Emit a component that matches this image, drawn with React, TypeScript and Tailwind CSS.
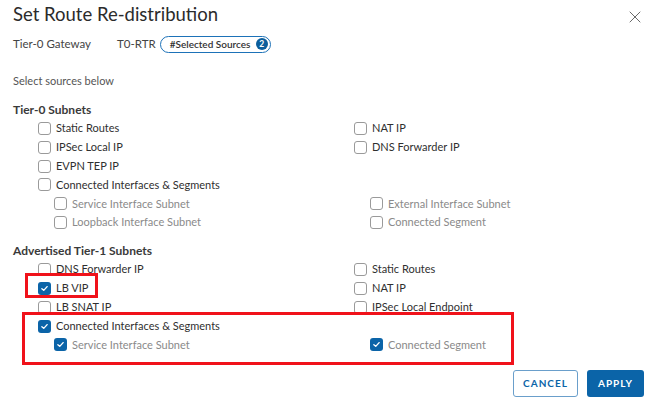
import { X } from 'lucide-react';

type Item = { label: string; checked?: boolean; sub?: boolean; dim?: boolean };
type Row = [Item | null, Item | null];

const TIER0: Row[] = [
  [{ label: 'Static Routes' }, { label: 'NAT IP' }],
  [{ label: 'IPSec Local IP' }, { label: 'DNS Forwarder IP' }],
  [{ label: 'EVPN TEP IP' }, null],
  [{ label: 'Connected Interfaces & Segments' }, null],
  [
    { label: 'Service Interface Subnet', sub: true, dim: true },
    { label: 'External Interface Subnet', sub: true, dim: true },
  ],
  [
    { label: 'Loopback Interface Subnet', sub: true, dim: true },
    { label: 'Connected Segment', sub: true, dim: true },
  ],
];

const TIER1: Row[] = [
  [{ label: 'DNS Forwarder IP' }, { label: 'Static Routes' }],
  [{ label: 'LB VIP', checked: true }, { label: 'NAT IP' }],
  [{ label: 'LB SNAT IP' }, { label: 'IPSec Local Endpoint' }],
  [{ label: 'Connected Interfaces & Segments', checked: true }, null],
  [
    { label: 'Service Interface Subnet', sub: true, dim: true, checked: true },
    { label: 'Connected Segment', sub: true, dim: true, checked: true },
  ],
];

function Checkbox({ checked }: { checked?: boolean }) {
  if (checked) {
    return (
      <span className="flex h-[13px] w-[13px] shrink-0 items-center justify-center rounded-[3px] bg-[#0b64a8]">
        <svg viewBox="0 0 12 12" className="h-[9px] w-[9px]">
          <path d="M2.5 6.2 L5 8.5 L9.5 3.5" fill="none" stroke="white" strokeWidth="1.8" strokeLinecap="round" strokeLinejoin="round" />
        </svg>
      </span>
    );
  }
  return <span className="h-[13px] w-[13px] shrink-0 rounded-[3px] border border-[#9a9a9a] bg-white" />;
}

function Option({ item }: { item: Item | null }) {
  if (!item) return <div />;
  return (
    <div className={`flex items-center gap-[5px] ${item.sub ? 'pl-4' : ''}`}>
      <Checkbox checked={item.checked} />
      <span className={item.dim ? 'text-[#8a8a8a]' : 'text-[#2f2f2f]'}>{item.label}</span>
    </div>
  );
}

function Section({ title, rows }: { title: string; rows: Row[] }) {
  return (
    <div>
      <div className="flex h-[19px] items-center text-[12px] font-bold text-[#3a3a3a]">{title}</div>
      <div className="grid grid-cols-[316px_1fr] pl-[25px]">
        {rows.map((r, i) => (
          <div key={i} className="contents">
            <div className="flex h-[18.85px] items-center">
              <Option item={r[0]} />
            </div>
            <div className="flex h-[18.85px] items-center">
              <Option item={r[1]} />
            </div>
          </div>
        ))}
      </div>
    </div>
  );
}

export default function App() {
  return (
    <div className="relative h-[409px] w-[660px] overflow-hidden bg-white px-[13px] text-[11px] font-['Lato',sans-serif] text-[#333]">
      <div className="flex h-[30px] items-center justify-between">
        <h1 className="text-[18.5px] font-normal text-[#2b2b2b]">Set Route Re-distribution</h1>
        <X className="mr-[2px] mt-[4px] h-[20px] w-[20px] text-[#6a6a6a]" strokeWidth={1.2} />
      </div>

      <div className="mt-[5px] flex h-[18px] items-center text-[11.5px] text-[#444]">
        <span className="w-[104px]">Tier-0 Gateway</span>
        <span className="mr-[4px]">T0-RTR</span>
        <span className="flex h-[17px] w-[111px] items-center justify-between rounded-full border-[1.5px] border-[#1d72b8] pl-[9px] pr-[2px] text-[10px] font-semibold text-[#333]">
          #Selected Sources
          <span className="flex h-[12px] w-[12px] items-center justify-center rounded-full bg-[#0b5e9c] text-[8.5px] font-bold text-white">
            2
          </span>
        </span>
      </div>

      <div className="mt-[19px] flex h-[18px] items-center text-[#555]">Select sources below</div>

      <div className="mt-[10px]">
        <Section title="Tier-0 Subnets" rows={TIER0} />
      </div>
      <div className="mt-[9px]">
        <Section title="Advertised Tier-1 Subnets" rows={TIER1} />
      </div>

      <div className="mt-[16px] flex justify-end gap-[9px] pr-[3px]">
        <button className="h-[27px] w-[65px] rounded-[3px] border border-[#6a9fcb] bg-white text-[10px] font-bold tracking-[1px] text-[#0b64a8]">
          CANCEL
        </button>
        <button className="h-[27px] w-[57px] rounded-[3px] bg-[#0b64a8] text-[10px] font-bold tracking-[1px] text-white">
          APPLY
        </button>
      </div>

      <div className="pointer-events-none absolute left-[25px] top-[273px] h-[25px] w-[73px] border-[3px] border-[#f0121a]" />
      <div className="pointer-events-none absolute left-[22px] top-[312px] h-[53px] w-[492px] border-[3px] border-[#f0121a]" />
    </div>
  );
}
